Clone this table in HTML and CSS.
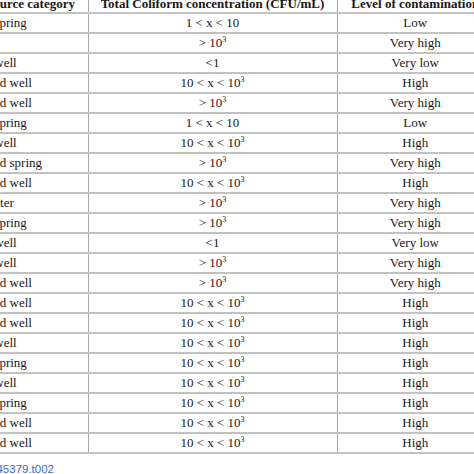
FILE: index.html
```html
<!DOCTYPE html>
<html lang="en">
<head>
<meta charset="utf-8">
<title>Table 2</title>
<link rel="stylesheet" href="styles.css">
</head>
<body>
<div class="page">
<table class="data">
<colgroup><col class="c1"><col class="c2"><col class="c3"></colgroup>
<thead>
<tr><th class="src">Source category</th><th>Total Coliform concentration (CFU/mL)</th><th>Level of contamination</th></tr>
</thead>
<tbody>
<tr><td class="src">Protected spring</td><td>1 &lt; x &lt; 10</td><td>Low</td></tr>
<tr><td class="src">River</td><td>&gt; 10<sup>3</sup></td><td>Very high</td></tr>
<tr><td class="src">Protected well</td><td>&lt;1</td><td>Very low</td></tr>
<tr><td class="src">Unprotected well</td><td>10 &lt; x &lt; 10<sup>3</sup></td><td>High</td></tr>
<tr><td class="src">Unprotected well</td><td>&gt; 10<sup>3</sup></td><td>Very high</td></tr>
<tr><td class="src">Protected spring</td><td>1 &lt; x &lt; 10</td><td>Low</td></tr>
<tr><td class="src">Protected well</td><td>10 &lt; x &lt; 10<sup>3</sup></td><td>High</td></tr>
<tr><td class="src">Unprotected spring</td><td>&gt; 10<sup>3</sup></td><td>Very high</td></tr>
<tr><td class="src">Unprotected well</td><td>10 &lt; x &lt; 10<sup>3</sup></td><td>High</td></tr>
<tr><td class="src">Surface water</td><td>&gt; 10<sup>3</sup></td><td>Very high</td></tr>
<tr><td class="src">Protected spring</td><td>&gt; 10<sup>3</sup></td><td>Very high</td></tr>
<tr><td class="src">Protected well</td><td>&lt;1</td><td>Very low</td></tr>
<tr><td class="src">Protected well</td><td>&gt; 10<sup>3</sup></td><td>Very high</td></tr>
<tr><td class="src">Unprotected well</td><td>&gt; 10<sup>3</sup></td><td>Very high</td></tr>
<tr><td class="src">Unprotected well</td><td>10 &lt; x &lt; 10<sup>3</sup></td><td>High</td></tr>
<tr><td class="src">Unprotected well</td><td>10 &lt; x &lt; 10<sup>3</sup></td><td>High</td></tr>
<tr><td class="src">Protected well</td><td>10 &lt; x &lt; 10<sup>3</sup></td><td>High</td></tr>
<tr><td class="src">Protected spring</td><td>10 &lt; x &lt; 10<sup>3</sup></td><td>High</td></tr>
<tr><td class="src">Protected well</td><td>10 &lt; x &lt; 10<sup>3</sup></td><td>High</td></tr>
<tr><td class="src">Protected spring</td><td>10 &lt; x &lt; 10<sup>3</sup></td><td>High</td></tr>
<tr><td class="src">Unprotected well</td><td>10 &lt; x &lt; 10<sup>3</sup></td><td>High</td></tr>
<tr><td class="src">Unprotected well</td><td>10 &lt; x &lt; 10<sup>3</sup></td><td>High</td></tr>
</tbody>
</table>
<div class="doi"><span class="doi-text">https://doi.org/10.1371/journal.pone.0245379.t002</span></div>
</div>
</body>
</html>
```
FILE: styles.css
```css
html, body {
  margin: 0;
  padding: 0;
  background: #ffffff;
  overflow: hidden;
}
.page {
  width: 474px;
  height: 474px;
  overflow: hidden;
}
.data {
  border-collapse: collapse;
  table-layout: fixed;
  width: 553px;
  margin-left: -60px;
  margin-top: -5px;
  font-family: "Liberation Serif", "Times New Roman", serif;
  font-size: 13px;
  color: #1a1718;
}
.c1 { width: 148px; }
.c2 { width: 249px; }
.c3 { width: 156px; }
.data th {
  height: 17px;
  line-height: 17px;
  padding: 0;
  font-weight: bold;
  text-align: center;
  white-space: nowrap;
  border-bottom: 2px solid #c2c2c2;
}
.data td {
  height: 18px;
  line-height: 18px;
  padding: 0;
  text-align: center;
  white-space: nowrap;
  border-bottom: 2px solid #c2c2c2;
}
.data th + th, .data td + td {
  border-left: 1px solid #a8a8a8;
}
.data td.src {
  text-align: left;
  padding-left: 2px;
}
.data th.src {
  text-align: left;
  padding-left: 46px;
}
.data sup {
  font-size: 8px;
  line-height: 0;
  vertical-align: 5px;
}
.doi {
  width: 54px;
  margin-top: 9px;
  display: flex;
  justify-content: flex-end;
  overflow: hidden;
}
.doi-text {
  flex: none;
  white-space: nowrap;
  font-family: "Liberation Sans", Arial, sans-serif;
  font-size: 11.5px;
  line-height: 12px;
  color: #3a6bc9;
}
```
